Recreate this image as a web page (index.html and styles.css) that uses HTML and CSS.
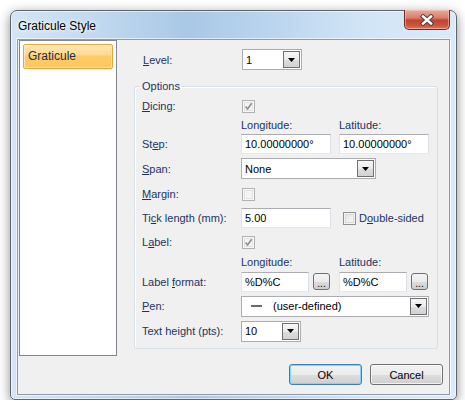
FILE: index.html
```html
<!DOCTYPE html>
<html lang="en">
<head>
    <meta charset="UTF-8">
    <title>Graticule Style</title>
    <link rel="stylesheet" href="styles.css">
</head>
<body>
    <div class="window">
        <div class="titlebar">
            <span class="title">Graticule Style</span>
            <button class="close-btn">
                <svg width="16" height="12" viewBox="0 0 16 12">
                    <path d="M4 2.5 L12 9.5 M12 2.5 L4 9.5" stroke="#4a4040" stroke-width="4.4" stroke-linecap="square"/>
                    <path d="M4 2.5 L12 9.5 M12 2.5 L4 9.5" stroke="#ffffff" stroke-width="2.4" stroke-linecap="square"/>
                </svg>
            </button>
        </div>

        <div class="client">
            <div class="main">
                <ul class="pages">
                    <li class="page selected">Graticule</li>
                </ul>

                <div class="pane">
                    <div class="level-row">
                        <span class="lbl"><u>L</u>evel:</span>
                        <div class="combo w-small">
                            <span class="combo-text">1</span>
                            <span class="drop"><svg width="7" height="4" viewBox="0 0 7 4"><path d="M0 0 H7 L3.5 4 Z" fill="#000"/></svg></span>
                        </div>
                    </div>

                    <fieldset class="options">
                        <legend>Options</legend>
                        <div class="form">
                            <span class="lbl"><u>D</u>icing:</span>
                            <div class="cell span2"><span class="check disabled checked"><svg width="9" height="9" viewBox="0 0 9 9"><path d="M1.5 4.5 L3.6 7 L7.6 1.3" fill="none" stroke="#8c8c8c" stroke-width="1.6"/></svg></span></div>

                            <div></div>
                            <span class="hdr">Longitude:</span>
                            <span class="hdr">Latitude:</span>

                            <span class="lbl">St<u>e</u>p:</span>
                            <div class="cell"><span class="textbox w-step">10.00000000°</span></div>
                            <div class="cell"><span class="textbox w-step">10.00000000°</span></div>

                            <span class="lbl"><u>S</u>pan:</span>
                            <div class="cell span2">
                                <div class="combo w-span">
                                    <span class="combo-text">None</span>
                                    <span class="drop"><svg width="7" height="4" viewBox="0 0 7 4"><path d="M0 0 H7 L3.5 4 Z" fill="#000"/></svg></span>
                                </div>
                            </div>

                            <span class="lbl"><u>M</u>argin:</span>
                            <div class="cell span2"><span class="check disabled"></span></div>

                            <span class="lbl">Ti<u>c</u>k length (mm):</span>
                            <div class="cell"><span class="textbox w-step">5.00</span></div>
                            <div class="cell">
                                <span class="check side-check"></span>
                                <span class="check-text">D<u>o</u>uble-sided</span>
                            </div>

                            <span class="lbl">L<u>a</u>bel:</span>
                            <div class="cell span2"><span class="check disabled checked"><svg width="9" height="9" viewBox="0 0 9 9"><path d="M1.5 4.5 L3.6 7 L7.6 1.3" fill="none" stroke="#8c8c8c" stroke-width="1.6"/></svg></span></div>

                            <div></div>
                            <span class="hdr">Longitude:</span>
                            <span class="hdr">Latitude:</span>

                            <span class="lbl">Label <u>f</u>ormat:</span>
                            <div class="cell">
                                <span class="textbox w-fmt">%D%C</span>
                                <button class="dots">...</button>
                            </div>
                            <div class="cell">
                                <span class="textbox w-fmt">%D%C</span>
                                <button class="dots">...</button>
                            </div>

                            <span class="lbl"><u>P</u>en:</span>
                            <div class="cell span2">
                                <div class="combo w-pen">
                                    <span class="combo-text"><span class="pen-line"></span>(user-defined)</span>
                                    <span class="drop"><svg width="7" height="4" viewBox="0 0 7 4"><path d="M0 0 H7 L3.5 4 Z" fill="#000"/></svg></span>
                                </div>
                            </div>

                            <span class="lbl">Text hei<u>g</u>ht (pts):</span>
                            <div class="cell span2">
                                <div class="combo w-small">
                                    <span class="combo-text">10</span>
                                    <span class="drop"><svg width="7" height="4" viewBox="0 0 7 4"><path d="M0 0 H7 L3.5 4 Z" fill="#000"/></svg></span>
                                </div>
                            </div>
                        </div>
                    </fieldset>
                </div>
            </div>

            <div class="footer">
                <button class="btn default">OK</button>
                <button class="btn">Cancel</button>
            </div>
        </div>
    </div>
</body>
</html>
```

FILE: styles.css
```css
* {
    box-sizing: border-box;
}

body {
    margin: 0;
    padding: 10px 0 0 10px;
    background: #ffffff;
    font-family: "Liberation Sans", Arial, sans-serif;
    font-size: 11px;
}

/* window frame */
.window {
    width: 447px;
    height: 390px;
    padding: 0 6px 4px 6px;
    border: 1px solid #5d6670;
    border-radius: 7px 7px 5px 5px;
    background: linear-gradient(to right, #d3e5f6 0%, #c0d8ef 20%, #a9c8e6 40%, #bcd6ef 60%, #d2e5f6 80%, #dbeaf8 100%);
    box-shadow: 0 3px 12px rgba(0, 0, 0, 0.45), inset 0 0 0 1px rgba(255, 255, 255, 0.55);
}

.titlebar {
    height: 28px;
    display: flex;
    justify-content: space-between;
    align-items: flex-start;
}

.title {
    margin: 8px 0 0 1px;
    font-size: 12px;
    line-height: 14px;
    color: #000;
    text-shadow: 0 0 6px #ffffff, 0 0 3px #ffffff;
}

.close-btn {
    width: 46px;
    height: 20px;
    margin-top: -1px;
    padding: 0;
    border: 1px solid #6e2a22;
    border-top: none;
    border-radius: 0 0 5px 5px;
    background: linear-gradient(#e9a99c 0%, #d9806f 40%, #c1432f 55%, #cc5a3f 85%, #e07c5e 100%);
    box-shadow: inset 0 0 0 1px rgba(255, 210, 200, 0.5);
    display: flex;
    align-items: center;
    justify-content: center;
}

.client {
    height: 356px;
    border: 1px solid #8c9cad;
    background: #f0f0f0;
    box-shadow: 0 0 0 1px rgba(255, 255, 255, 0.6);
    display: flex;
    flex-direction: column;
}

.main {
    height: 316px;
    display: flex;
}

/* page list */
.pages {
    list-style: none;
    margin: 0 0 0 1px;
    padding: 3px;
    width: 98px;
    height: 316px;
    background: #ffffff;
    border: 1px solid #828790;
}

.page {
    height: 25px;
    padding: 5px 0 0 4px;
    line-height: 13px;
    font-size: 12px;
    color: #1e2d4b;
}

.page.selected {
    border: 1px solid #e3a640;
    border-radius: 2px;
    background: linear-gradient(#ffe7b0 0%, #ffdb94 40%, #ffcb67 50%, #ffc760 100%);
    box-shadow: inset 0 0 0 1px rgba(255, 240, 205, 0.7);
}

/* right pane */
.pane {
    flex: 1;
    padding: 9px 0 0 17px;
}

.level-row {
    height: 21px;
    margin-left: 9px;
    display: flex;
    align-items: center;
}

.level-row .lbl {
    width: 99px;
}

.lbl, .hdr, .check-text, legend {
    color: #1c3461;
    line-height: 13px;
    white-space: nowrap;
}

.lbl {
    padding-top: 1px;
}

u {
    text-underline-offset: 1px;
}

.options {
    width: 304px;
    margin: 10px 0 0 0;
    padding: 1px 0 4px 7px;
    border: 1px solid #d5dfe5;
    border-radius: 3px;
    box-shadow: inset 1px 1px 0 #ffffff;
}

.options legend {
    padding: 0 2px;
    margin-left: -2px;
}

.form {
    display: grid;
    grid-template-columns: 99px 98px 98px;
    grid-template-rows: 24px 14px 24px 25px 26px 22px 26px 14px 25px 24px 26px;
    align-items: center;
}

.cell {
    display: flex;
    align-items: center;
}

.span2 {
    grid-column: span 2;
}

/* controls */
.textbox {
    height: 20px;
    padding: 0 3px;
    line-height: 18px;
    color: #000;
    background: #ffffff;
    border: 1px solid #abadb3;
    border-color: #abadb3 #dbdfe6 #e3e9ef #e2e3ea;
    white-space: nowrap;
    overflow: hidden;
}

.w-step {
    width: 90px;
}

.w-fmt {
    width: 68px;
}

.combo {
    height: 21px;
    display: flex;
    align-items: center;
    justify-content: space-between;
    background: #ffffff;
    border: 1px solid #abadb3;
    color: #000;
}

.w-small {
    width: 60px;
}

.w-span {
    width: 135px;
}

.w-pen {
    width: 188px;
}

.combo-text {
    padding-left: 3px;
    display: flex;
    align-items: center;
    white-space: nowrap;
}

.pen-line {
    width: 11px;
    height: 2px;
    margin: 0 11px 0 6px;
    background: #6a6a6a;
}

.drop {
    width: 17px;
    height: 17px;
    margin-right: 1px;
    border: 1px solid #707070;
    background: linear-gradient(#f6f6f6 0%, #ebebeb 50%, #dddddd 51%, #d2d2d2 100%);
    display: flex;
    align-items: center;
    justify-content: center;
}

.dots {
    width: 17px;
    height: 17px;
    margin-left: 4px;
    padding: 0;
    border: 1px solid #707070;
    border-radius: 3px;
    background: linear-gradient(#f4f4f4 0%, #ebebeb 50%, #dddddd 51%, #cfcfcf 100%);
    font-family: inherit;
    font-size: 10px;
    line-height: 20px;
    color: #000;
}

.check {
    width: 13px;
    height: 13px;
    margin-left: 1px;
    border: 1px solid #8e8f8f;
    background: linear-gradient(135deg, #dcdcdc 0%, #ffffff 100%);
    box-shadow: inset 0 0 0 1px #f4f4f4, inset 0 0 0 2px #d8d8d8;
    display: flex;
    align-items: center;
    justify-content: center;
}

.check.disabled {
    border-color: #b1b1b1;
    background: #f4f4f4;
    box-shadow: inset 0 0 0 1px #f7f7f7, inset 0 0 0 2px #e2e2e2;
}

.side-check {
    margin-left: 4px;
}

.check-text {
    margin-left: 3px;
    color: #1c3461;
}

/* footer */
.footer {
    flex: 1;
    padding: 8px 6px 0 0;
    display: flex;
    justify-content: flex-end;
    align-items: flex-start;
    gap: 8px;
}

.btn {
    width: 73px;
    height: 21px;
    padding: 0;
    border: 1px solid #707070;
    border-radius: 3px;
    background: linear-gradient(#f2f2f2 0%, #ebebeb 50%, #dddddd 51%, #cfcfcf 100%);
    box-shadow: inset 0 0 0 1px rgba(255, 255, 255, 0.7);
    font-family: inherit;
    font-size: 11px;
    color: #000;
}

.btn.default {
    border-color: #3c7fb1;
    box-shadow: inset 0 0 0 1px #7fd4fb;
}
```
